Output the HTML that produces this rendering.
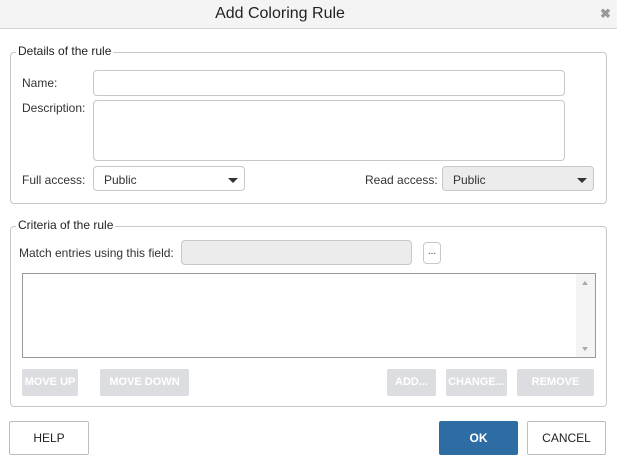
<!DOCTYPE html>
<html><head><style>
body{margin:0;width:617px;height:473px;background:#fff;font-family:"Liberation Sans",sans-serif;position:relative;overflow:hidden;color:#333}
.a{position:absolute;box-sizing:border-box}
.hdr{left:0;top:0;width:617px;height:29px;background:#f4f4f4;border-bottom:1px solid #d4d4d4}
.t{font-size:16px;color:#222;left:0;width:560px;text-align:center;top:5px}
.fs{border:1px solid #c8c8c8;border-radius:4px}
.lg{background:#fff;font-size:12px;padding:0 2px;color:#222}
.lb{font-size:12px;color:#333}
.in{border:1px solid #c8c8c8;border-radius:4px;background:#fff}
.sel{font-size:12px;padding:6px 0 0 10px}
.arr{position:absolute;right:6px;top:11px;width:0;height:0;border-left:5px solid transparent;border-right:5px solid transparent;border-top:5px solid #333}
.db{background:#dcdde0;color:#fff;font-weight:bold;font-size:11px;text-align:center;line-height:27px;border-radius:2px}
.bb{border:1px solid #b8bec4;border-radius:2px;text-align:center;font-size:12px;line-height:32px;color:#222;background:#fff}
</style></head><body>
<div class="a hdr"></div>
<div class="a t">Add Coloring Rule</div>
<div class="a" style="left:600px;top:6px;font-size:13px;color:#999;font-weight:bold">✖</div>

<div class="a fs" style="left:10px;top:52px;width:597px;height:152px"></div>
<div class="a lg" style="left:16px;top:44px">Details of the rule</div>
<div class="a lb" style="left:22px;top:76px">Name:</div>
<div class="a in" style="left:93px;top:70px;width:472px;height:26px"></div>
<div class="a lb" style="left:22px;top:101px">Description:</div>
<div class="a in" style="left:93px;top:100px;width:472px;height:61px"></div>
<div class="a lb" style="left:22px;top:173px">Full access:</div>
<div class="a in sel" style="left:93px;top:166px;width:152px;height:25px">Public<div class="arr"></div></div>
<div class="a lb" style="left:365px;top:173px">Read access:</div>
<div class="a in sel" style="left:442px;top:166px;width:152px;height:25px;background:#ececec">Public<div class="arr"></div></div>

<div class="a fs" style="left:10px;top:226px;width:597px;height:181px"></div>
<div class="a lg" style="left:16px;top:218px">Criteria of the rule</div>
<div class="a lb" style="left:19px;top:246px">Match entries using this field:</div>
<div class="a in" style="left:181px;top:240px;width:231px;height:25px;background:#ececec"></div>
<div class="a in" style="left:423px;top:242px;width:18px;height:22px;font-size:10px;text-align:center;line-height:18px">...</div>
<div class="a" style="left:22px;top:273px;width:574px;height:85px;border:1px solid #999"></div>
<div class="a" style="left:576px;top:274px;width:19px;height:83px;background:#f4f4f4"></div>
<div class="a" style="left:582px;top:281px;border-left:3px solid transparent;border-right:3px solid transparent;border-bottom:4px solid #aaa"></div>
<div class="a" style="left:582px;top:347px;border-left:3px solid transparent;border-right:3px solid transparent;border-top:4px solid #aaa"></div>
<div class="a db" style="left:22px;top:369px;width:56px;height:27px">MOVE UP</div>
<div class="a db" style="left:100px;top:369px;width:89px;height:27px">MOVE DOWN</div>
<div class="a db" style="left:387px;top:369px;width:49px;height:27px">ADD...</div>
<div class="a db" style="left:446px;top:369px;width:61px;height:27px">CHANGE...</div>
<div class="a db" style="left:517px;top:369px;width:77px;height:27px">REMOVE</div>

<div class="a bb" style="left:9px;top:421px;width:80px;height:34px">HELP</div>
<div class="a bb" style="left:439px;top:421px;width:79px;height:34px;background:#2e6da4;border-color:#2e6da4;color:#fff;font-weight:bold">OK</div>
<div class="a bb" style="left:527px;top:421px;width:79px;height:34px">CANCEL</div>
</body></html>
